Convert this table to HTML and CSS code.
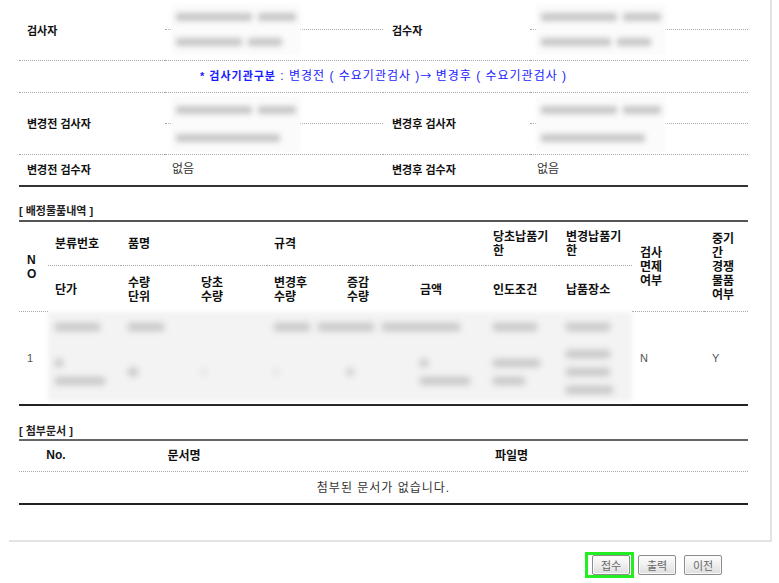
FILE: index.html
```html
<!DOCTYPE html>
<html lang="ko">
<head>
<meta charset="utf-8">
<title>검사자 정보</title>
<link rel="stylesheet" href="styles.css">
</head>
<body>
<div class="box">
  <table class="info">
    <colgroup><col class="c-l"><col class="c-v"><col class="c-l"><col class="c-v"></colgroup>
    <tr class="r-first">
      <td class="lbl">검사자</td>
      <td class="val">
        <div class="split">
          <div class="sub"></div><div class="sub"></div>
          <div class="redact">
            <div class="rl"><span class="bar w76"></span><span class="bar w38"></span></div>
            <div class="rl"><span class="bar w66"></span><span class="bar w34"></span></div>
          </div>
        </div>
      </td>
      <td class="lbl lbl2">검수자</td>
      <td class="val">
        <div class="split">
          <div class="sub"></div><div class="sub"></div>
          <div class="redact">
            <div class="rl"><span class="bar w76"></span><span class="bar w38"></span></div>
            <div class="rl"><span class="bar w70"></span><span class="bar w34"></span></div>
          </div>
        </div>
      </td>
    </tr>
    <tr class="r-blue">
      <td colspan="4" class="blue"><b>* 검사기관구분</b> : 변경전 ( 수요기관검사 )<span class="arrow">→</span> 변경후 ( 수요기관검사 )</td>
    </tr>
    <tr class="r-tall">
      <td class="lbl">변경전 검사자</td>
      <td class="val">
        <div class="split">
          <div class="sub"></div><div class="sub"></div>
          <div class="redact">
            <div class="rl"><span class="bar w76"></span><span class="bar w38"></span></div>
            <div class="rl"><span class="bar w104"></span></div>
          </div>
        </div>
      </td>
      <td class="lbl lbl2">변경후 검사자</td>
      <td class="val">
        <div class="split">
          <div class="sub"></div><div class="sub"></div>
          <div class="redact">
            <div class="rl"><span class="bar w76"></span><span class="bar w38"></span></div>
            <div class="rl"><span class="bar w104"></span></div>
          </div>
        </div>
      </td>
    </tr>
    <tr class="r-short">
      <td class="lbl">변경전 검수자</td>
      <td class="txt">없음</td>
      <td class="lbl lbl2">변경후 검수자</td>
      <td class="txt">없음</td>
    </tr>
  </table>

  <div class="sec-title first">[ 배정물품내역 ]</div>
  <table class="items">
    <colgroup>
      <col class="c-no">
      <col class="c-m"><col class="c-m"><col class="c-m"><col class="c-m">
      <col class="c-m"><col class="c-m"><col class="c-m"><col class="c-m">
      <col class="c-m9"><col class="c-m10">
    </colgroup>
    <tr class="h1">
      <th rowspan="2" class="pno">N<br>O</th>
      <th>분류번호</th>
      <th colspan="2">품명</th>
      <th colspan="3">규격</th>
      <th>당초납품기<br>한</th>
      <th>변경납품기<br>한</th>
      <th rowspan="2" class="p8">검사<br>면제<br>여부</th>
      <th rowspan="2" class="p8">중기<br>간<br>경쟁<br>물품<br>여부</th>
    </tr>
    <tr class="h2">
      <th>단가</th>
      <th>수량<br>단위</th>
      <th>당초<br>수량</th>
      <th>변경후<br>수량</th>
      <th>증감<br>수량</th>
      <th>금액</th>
      <th>인도조건</th>
      <th>납품장소</th>
    </tr>
    <tr class="data">
      <td class="pno dot">1</td>
      <td colspan="8" class="red-cell">
        <div class="red-grid">
          <div class="g"><span class="bar w45"></span></div>
          <div class="g"><span class="bar w36"></span></div>
          <div class="g"></div>
          <div class="g span3"><span class="bar w36"></span><span class="bar w56"></span><span class="bar w78"></span></div>
          <div class="g"><span class="bar w44"></span></div>
          <div class="g"><span class="bar w44"></span></div>
          <div class="g col"><span class="bar w8"></span><span class="bar w50"></span></div>
          <div class="g"><span class="bar w10"></span></div>
          <div class="g"><span class="bar w5 faint"></span></div>
          <div class="g"><span class="bar w5 faint"></span></div>
          <div class="g"><span class="bar w6"></span></div>
          <div class="g col"><span class="bar w8"></span><span class="bar w50"></span></div>
          <div class="g col"><span class="bar w47"></span><span class="bar w32"></span></div>
          <div class="g col"><span class="bar w44"></span><span class="bar w44"></span><span class="bar w47"></span></div>
        </div>
      </td>
      <td class="p8 dot">N</td>
      <td class="p8 dot">Y</td>
    </tr>
  </table>

  <div class="sec-title second">[ 첨부문서 ]</div>
  <table class="files">
    <colgroup><col class="c-f1"><col class="c-f2"><col class="c-f3"></colgroup>
    <tr class="f-head">
      <th>No.</th>
      <th>문서명</th>
      <th>파일명</th>
    </tr>
    <tr class="f-row">
      <td colspan="3">첨부된 문서가 없습니다.</td>
    </tr>
  </table>
</div>

<div class="btns">
  <span class="hl"><button class="btn">접수</button></span>
  <button class="btn">출력</button>
  <button class="btn">이전</button>
</div>
</body>
</html>
```

FILE: styles.css
```css
body {
  margin: 0;
  font-family: "Liberation Sans", "Noto Sans CJK KR", sans-serif;
  font-size: 12px;
  color: #222;
  background: #fff;
}

.box {
  margin-left: 9px;
  width: 729px;
  padding: 0 22px 35px 10px;
  border-right: 2px solid #e3e3e3;
  border-bottom: 2px solid #e3e3e3;
}

table {
  border-collapse: collapse;
  table-layout: fixed;
  width: 729px;
}

/* ---------- inspector info ---------- */
.c-l { width: 146px; }
.c-v { width: 218px; }
.info .c-l + .c-v + .c-l { width: 147px; }

.info td {
  padding: 0;
  vertical-align: middle;
}
.info tr + tr td {
  border-top: 1px dotted #a8a8a8;
}
.info {
  border-bottom: 2px solid #333;
}
.info .lbl {
  padding-left: 8px;
  padding-bottom: 1px;
  font-weight: bold;
  font-size: 11px;
  color: #111;
}
.info .lbl2 { padding-left: 9px; }

.r-first { height: 60px; }
.r-blue { height: 32px; }
.r-tall { height: 62px; }
.r-short { height: 31px; }

.split {
  position: relative;
  height: 60px;
}
.r-tall .split { height: 61px; }
.sub { height: 29px; }
.r-tall .sub { height: 30px; }
.sub:first-child { border-bottom: 1px dotted #a8a8a8; }

.redact {
  position: absolute;
  left: 6px;
  top: 4px;
  width: 130px;
  height: 51px;
  background: #fbfbfb;
  filter: blur(1.5px);
  display: flex;
  flex-direction: column;
  justify-content: space-around;
  padding-left: 5px;
  box-sizing: border-box;
}
.r-tall .redact { top: 3px; height: 56px; }
.rl { display: flex; gap: 6px; }

.bar {
  display: inline-block;
  height: 8px;
  background: #c6c6c6;
  border-radius: 2px;
  filter: blur(2.4px);
}
.bar.faint { background: #e2e2e2; }
.w5 { width: 5px; } .w6 { width: 6px; } .w8 { width: 8px; } .w10 { width: 10px; }
.w32 { width: 32px; } .w34 { width: 34px; } .w36 { width: 36px; } .w38 { width: 38px; }
.w44 { width: 44px; } .w45 { width: 45px; } .w47 { width: 47px; } .w50 { width: 50px; }
.w56 { width: 56px; } .w66 { width: 66px; } .w70 { width: 70px; } .w76 { width: 76px; }
.w78 { width: 78px; } .w104 { width: 104px; }

.blue {
  text-align: center;
  color: #1a1aff;
  letter-spacing: 1px;
  padding-bottom: 4px !important;
}
.blue b { font-size: 11px; }
.blue .arrow {
  font-family: "Noto Sans CJK KR", sans-serif;
  font-size: 11px;
  letter-spacing: 0;
}

.txt {
  padding-left: 7px !important;
  padding-bottom: 4px !important;
  color: #333;
}

/* ---------- section titles ---------- */
.sec-title {
  font-weight: bold;
  font-size: 11px;
  line-height: 14px;
  color: #222;
}
.sec-title.first { margin-top: 17px; margin-bottom: 2px; }
.sec-title.second { margin-top: 18px; margin-bottom: 1px; }

/* ---------- items ---------- */
.c-no { width: 29px; }
.c-m { width: 73px; }
.c-m9 { width: 72px; }
.c-m10 { width: 44px; }

.items {
  border-top: 2px solid #555;
  border-bottom: 2px solid #222;
}
.items th {
  font-weight: bold;
  font-size: 12px;
  text-align: left;
  padding: 0 0 0 7px;
  vertical-align: middle;
  line-height: 14px;
  color: #111;
}
.items .h1 { height: 45px; }
.items .h2 { height: 46px; }
.items .h1 th { padding-top: 2px; }
.items .h2 th {
  border-top: 1px dotted #a8a8a8;
  padding-top: 2px;
}
.items .pno { padding-left: 8px; }
.items .p8 { padding-left: 8px; }
.items td {
  padding: 0 0 0 8px;
  vertical-align: middle;
  color: #555;
  font-size: 11px;
}
.items td.dot { border-top: 1px dotted #a8a8a8; }
.items td.red-cell { padding: 0; }

.red-grid {
  display: grid;
  grid-template-columns: repeat(8, 73px);
  grid-template-rows: 31px 58px;
  background: #f3f3f3;
  filter: blur(2px);
  margin-bottom: 3px;
}
.red-grid .g {
  display: flex;
  align-items: center;
  gap: 8px;
  padding-left: 7px;
}
.red-grid .g.col {
  flex-direction: column;
  align-items: flex-start;
  justify-content: center;
  gap: 10px;
}
.red-grid .span3 { grid-column: span 3; }

/* ---------- files ---------- */
.c-f1 { width: 74px; }
.c-f2 { width: 182px; }
.c-f3 { width: 473px; }

.files {
  border-collapse: separate;
  border-spacing: 0;
  border-top: 2px solid #666;
  border-bottom: 2px solid #222;
}
.f-head { height: 30px; }
.f-row { height: 32px; }
.files th {
  text-align: center;
  font-weight: bold;
  font-size: 12px;
  padding: 0 0 2px 0;
  color: #111;
}
.files td {
  border-top: 1px dotted #a8a8a8;
  text-align: center;
  color: #333;
  letter-spacing: 1px;
  padding: 0 0 2px 0;
}

/* ---------- buttons ---------- */
.btns {
  display: flex;
  align-items: center;
  margin-top: 10px;
  padding-left: 585px;
}
.hl {
  display: inline-flex;
  align-items: center;
  width: 49px;
  height: 26px;
  box-sizing: border-box;
  border: 3px solid #22ee22;
  padding-left: 4px;
}
.btn {
  width: 38px;
  height: 20px;
  padding: 0;
  border: 1px solid #8c8c8c;
  border-radius: 2px;
  background: linear-gradient(#ffffff, #dedede);
  box-shadow: inset 0 0 0 1px #fafafa;
  font-family: "Noto Sans CJK KR", sans-serif;
  font-size: 11px;
  color: #666;
  margin-left: 8px;
}
.hl .btn { margin-left: 0; }
.hl + .btn { margin-left: 4px; }
```
